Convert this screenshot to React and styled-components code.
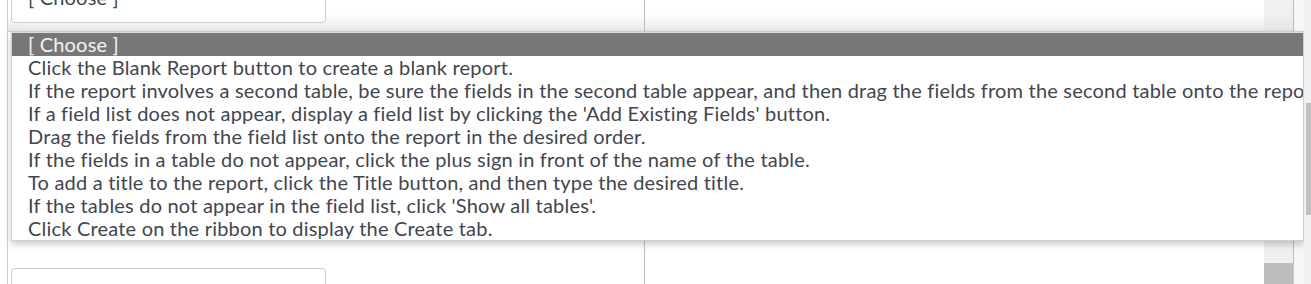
import React from 'react';
import styled, { createGlobalStyle } from 'styled-components';

const GlobalStyle = createGlobalStyle`
  html, body {
    margin: 0;
    padding: 0;
    overflow: hidden;
    background: #ffffff;
  }
  body {
    font-family: Lato, "Open Sans", "Liberation Sans", sans-serif;
  }
`;

const Page = styled.div`
  display: flex;
  width: 1311px;
  height: 284px;
  overflow: hidden;
`;

const Main = styled.div`
  position: relative;
  flex: 1;
  height: 100%;
  overflow: hidden;
`;

const Frame = styled.div`
  margin-left: 7px;
  height: 100%;
  border-left: 1px solid #cfcfcf;
  display: grid;
  grid-template-columns: 637px 1fr 30px 10px;
  grid-template-rows: 32px 231px 1fr;
`;

const Cell = styled.div`
  position: relative;
  background: ${(p) => p.$bg || '#fff'};
  border-right: ${(p) => p.$divider || 'none'};
  border-bottom: ${(p) => (p.$bottom ? '1px solid #d4d4d4' : 'none')};
  box-sizing: border-box;
`;

const TopSelect = styled.div`
  box-sizing: border-box;
  margin: -20px 0 0 3px;
  width: 315px;
  height: 43px;
  border: 1px solid #cccccc;
  border-radius: 4px;
  background: #fff;
  padding: 5px 0 0 16px;
  font-size: 20px;
  letter-spacing: 0.2px;
  line-height: 23px;
  color: #3f4650;
  display: flex;
  justify-content: space-between;
  align-items: flex-start;
`;

const BottomSelect = styled.div`
  box-sizing: border-box;
  margin: 5px 0 0 3px;
  width: 315px;
  height: 40px;
  border: 1px solid #cccccc;
  border-radius: 4px;
  background: #fff;
`;

const Chevron = styled.svg`
  margin: 7px 11px 0 0;
  flex: none;
`;

const Scrollbar = styled.div`
  width: 7px;
  height: 100%;
  background: #f1f1f1;
  display: flex;
  flex-direction: column;
  align-items: flex-end;
`;

const Thumb = styled.div`
  margin-top: 103px;
  width: 5px;
  height: 112px;
  background: #c1c1c1;
`;

const List = styled.ul`
  position: absolute;
  left: 11px;
  top: 32px;
  width: 1293px;
  margin: 0;
  padding: 0;
  list-style: none;
  box-sizing: border-box;
  background: #fff;
  border: 1px solid #cfcfcf;
  border-top-color: #dcdcdc;
  box-shadow: 0 3px 7px rgba(0, 0, 0, 0.22);
  overflow: hidden;
`;

const Option = styled.li`
  height: 23px;
  line-height: 23px;
  padding-left: 16px;
  font-size: 20px;
  letter-spacing: 0.2px;
  white-space: nowrap;
  color: ${(p) => (p.$selected ? '#f4f4f4' : '#3f4650')};
  background: ${(p) => (p.$selected ? '#777777' : '#ffffff')};
`;

const rowGradient = 'linear-gradient(#ffffff 0%, #ffffff 45%, #e8e8e8 100%)';

const options = [
  '[ Choose ]',
  'Click the Blank Report button to create a blank report.',
  'If the report involves a second table, be sure the fields in the second table appear, and then drag the fields from the second table onto the report.',
  "If a field list does not appear, display a field list by clicking the 'Add Existing Fields' button.",
  'Drag the fields from the field list onto the report in the desired order.',
  'If the fields in a table do not appear, click the plus sign in front of the name of the table.',
  'To add a title to the report, click the Title button, and then type the desired title.',
  "If the tables do not appear in the field list, click 'Show all tables'.",
  'Click Create on the ribbon to display the Create tab.',
];

export default function App() {
  return (
    <>
      <GlobalStyle />
      <Page>
        <Main>
          <Frame>
            <Cell $bg={rowGradient} $divider="1px solid #bdbdbd" $bottom>
              <TopSelect>
                <span>[ Choose ]</span>
                <Chevron width="12" height="8" viewBox="0 0 12 8">
                  <path d="M1.5 1.5 L6 6 L10.5 1.5" fill="none" stroke="#444" strokeWidth="1.6" />
                </Chevron>
              </TopSelect>
            </Cell>
            <Cell $bg={rowGradient} $bottom />
            <Cell $bg="linear-gradient(#f0f0f0 0%, #efefef 50%, #e4e4e4 100%)" $divider="1px solid #bbbbbb" $bottom />
            <Cell $bg="#f6f6f6" $bottom />

            <Cell $divider="1px solid #bdbdbd" />
            <Cell />
            <Cell $bg="#efefef" $divider="1px solid #bbbbbb" />
            <Cell $bg="#f6f6f6" />

            <Cell $divider="1px solid #bdbdbd">
              <BottomSelect />
            </Cell>
            <Cell />
            <Cell $bg="#bdbdbd" $divider="1px solid #cccccc" />
            <Cell $bg="#f6f6f6" />
          </Frame>
          <List>
            {options.map((text, i) => (
              <Option key={i} $selected={i === 0}>
                {text}
              </Option>
            ))}
          </List>
        </Main>
        <Scrollbar>
          <Thumb />
        </Scrollbar>
      </Page>
    </>
  );
}
